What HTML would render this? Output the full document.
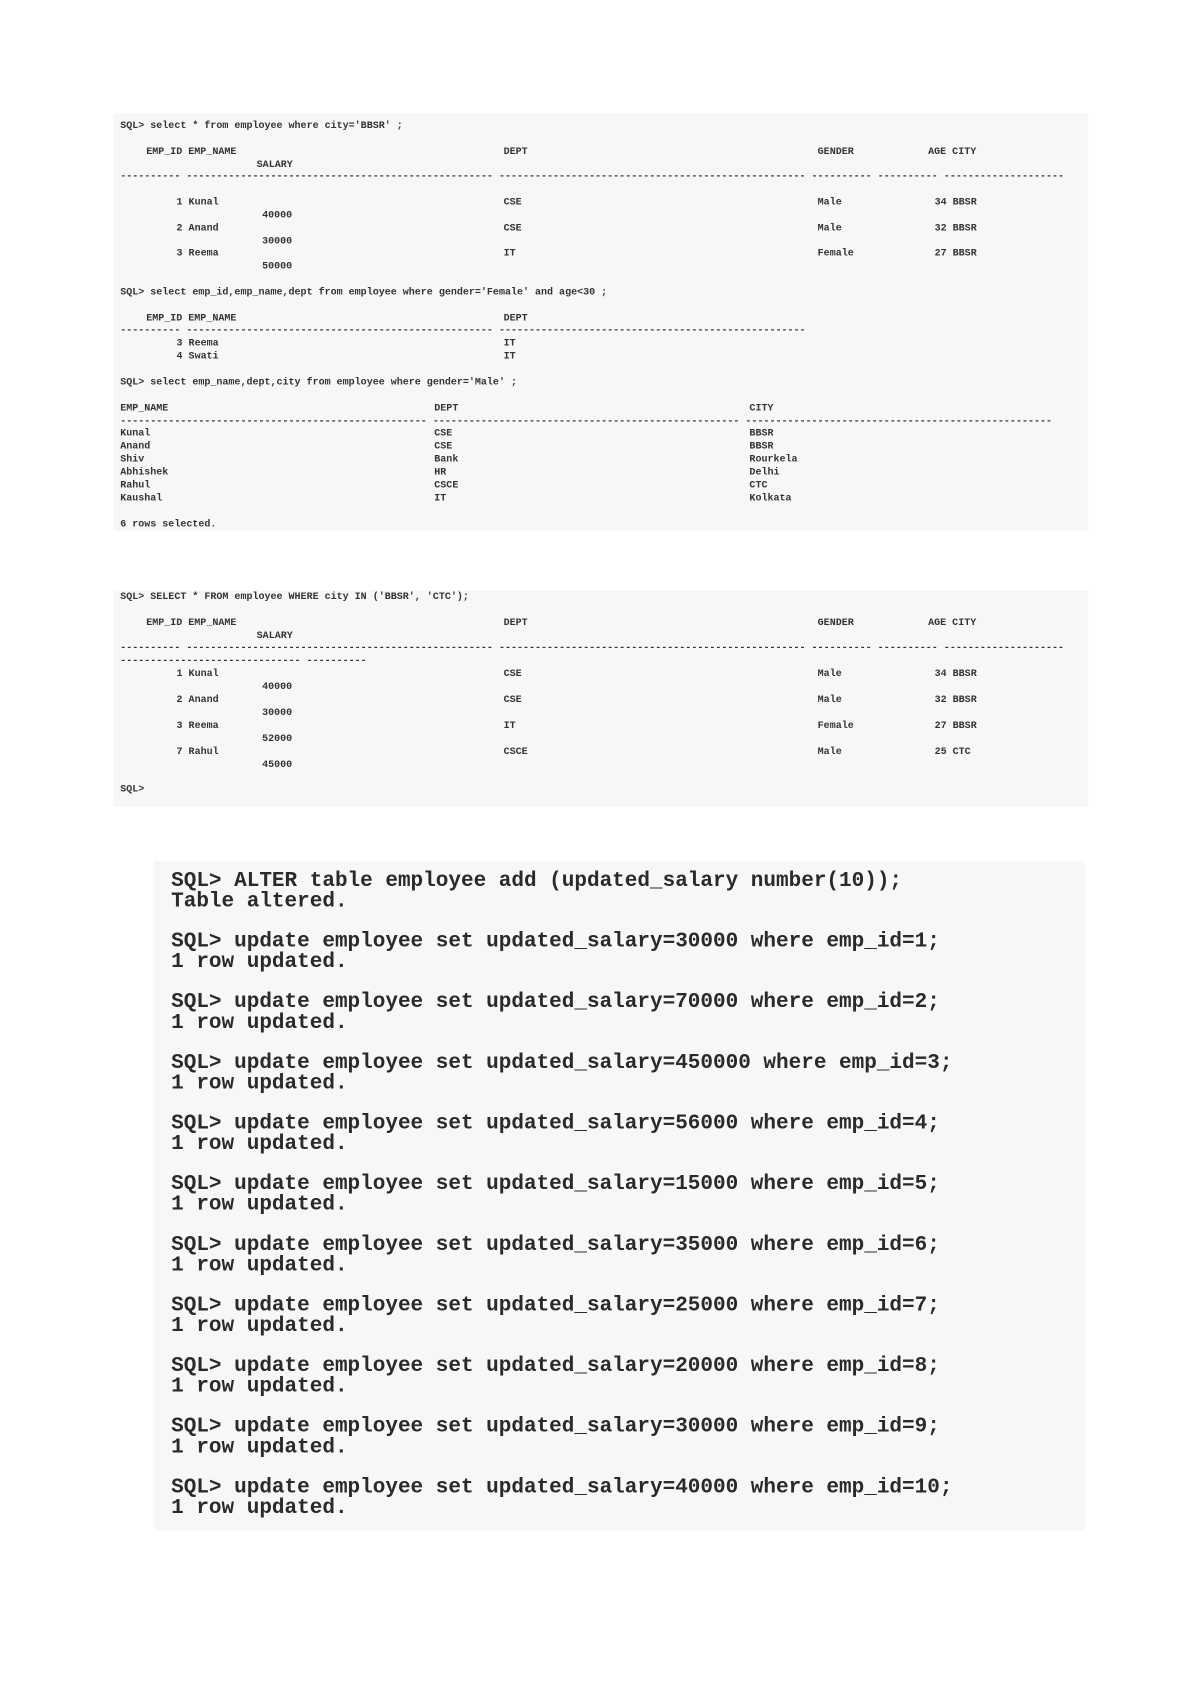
<!DOCTYPE html>
<html><head><meta charset="utf-8"><style>
html,body{margin:0;padding:0;background:#fff;width:1200px;height:1696px;overflow:hidden}
#w{position:absolute;left:0;top:0;width:1110px;height:1566px;transform:scale(1.083);transform-origin:0 0}
.box{position:absolute;background:#f7f7f7}
.s,.b{position:absolute;white-space:pre;font-family:"Liberation Mono",monospace;color:#222}
.s{font-size:9.25px;line-height:10px;margin-top:-5px;font-weight:bold;color:#333}
.b{font-size:19.4px;line-height:20px;margin-top:-10px;left:158px;font-weight:bold;color:#2a2a2a}
</style></head><body><div id="w">
<div class="box" style="left:105px;top:105px;width:900px;height:385px"></div>
<div class="box" style="left:105px;top:545px;width:900px;height:200px"></div>
<div class="box" style="left:142px;top:795px;width:860px;height:618px"></div>

<div class="s" style="left:111px;top:116px">SQL&gt; select * from employee where city='BBSR' ;</div>
<div class="s" style="left:135px;top:140px">EMP_ID EMP_NAME</div><div class="s" style="left:465px;top:140px">DEPT</div><div class="s" style="left:755px;top:140px">GENDER</div><div class="s" style="left:857px;top:140px">AGE CITY</div>
<div class="s" style="left:237px;top:152px">SALARY</div>
<div class="s" style="left:111px;top:163px">---------- --------------------------------------------------- --------------------------------------------------- ---------- ---------- --------------------</div>
<div class="s" style="left:163px;top:187px">1 Kunal</div><div class="s" style="left:465px;top:187px">CSE</div><div class="s" style="left:755px;top:187px">Male</div><div class="s" style="left:863px;top:187px">34 BBSR</div>
<div class="s" style="left:242px;top:199px">40000</div>
<div class="s" style="left:163px;top:211px">2 Anand</div><div class="s" style="left:465px;top:211px">CSE</div><div class="s" style="left:755px;top:211px">Male</div><div class="s" style="left:863px;top:211px">32 BBSR</div>
<div class="s" style="left:242px;top:223px">30000</div>
<div class="s" style="left:163px;top:234px">3 Reema</div><div class="s" style="left:465px;top:234px">IT</div><div class="s" style="left:755px;top:234px">Female</div><div class="s" style="left:863px;top:234px">27 BBSR</div>
<div class="s" style="left:242px;top:246px">50000</div>
<div class="s" style="left:111px;top:270px">SQL&gt; select emp_id,emp_name,dept from employee where gender='Female' and age&lt;30 ;</div>
<div class="s" style="left:135px;top:294px">EMP_ID EMP_NAME</div><div class="s" style="left:465px;top:294px">DEPT</div>
<div class="s" style="left:111px;top:305px">---------- --------------------------------------------------- ---------------------------------------------------</div>
<div class="s" style="left:163px;top:317px">3 Reema</div><div class="s" style="left:465px;top:317px">IT</div>
<div class="s" style="left:163px;top:329px">4 Swati</div><div class="s" style="left:465px;top:329px">IT</div>
<div class="s" style="left:111px;top:353px">SQL&gt; select emp_name,dept,city from employee where gender='Male' ;</div>
<div class="s" style="left:111px;top:377px">EMP_NAME</div><div class="s" style="left:401px;top:377px">DEPT</div><div class="s" style="left:692px;top:377px">CITY</div>
<div class="s" style="left:111px;top:389px">--------------------------------------------------- --------------------------------------------------- ---------------------------------------------------</div>
<div class="s" style="left:111px;top:400px">Kunal</div><div class="s" style="left:401px;top:400px">CSE</div><div class="s" style="left:692px;top:400px">BBSR</div>
<div class="s" style="left:111px;top:412px">Anand</div><div class="s" style="left:401px;top:412px">CSE</div><div class="s" style="left:692px;top:412px">BBSR</div>
<div class="s" style="left:111px;top:424px">Shiv</div><div class="s" style="left:401px;top:424px">Bank</div><div class="s" style="left:692px;top:424px">Rourkela</div>
<div class="s" style="left:111px;top:436px">Abhishek</div><div class="s" style="left:401px;top:436px">HR</div><div class="s" style="left:692px;top:436px">Delhi</div>
<div class="s" style="left:111px;top:448px">Rahul</div><div class="s" style="left:401px;top:448px">CSCE</div><div class="s" style="left:692px;top:448px">CTC</div>
<div class="s" style="left:111px;top:460px">Kaushal</div><div class="s" style="left:401px;top:460px">IT</div><div class="s" style="left:692px;top:460px">Kolkata</div>
<div class="s" style="left:111px;top:484px">6 rows selected.</div>

<div class="s" style="left:111px;top:551px">SQL&gt; SELECT * FROM employee WHERE city IN ('BBSR', 'CTC');</div>
<div class="s" style="left:135px;top:575px">EMP_ID EMP_NAME</div><div class="s" style="left:465px;top:575px">DEPT</div><div class="s" style="left:755px;top:575px">GENDER</div><div class="s" style="left:857px;top:575px">AGE CITY</div>
<div class="s" style="left:237px;top:587px">SALARY</div>
<div class="s" style="left:111px;top:598px">---------- --------------------------------------------------- --------------------------------------------------- ---------- ---------- --------------------</div>
<div class="s" style="left:111px;top:610px">------------------------------ ----------</div>
<div class="s" style="left:163px;top:622px">1 Kunal</div><div class="s" style="left:465px;top:622px">CSE</div><div class="s" style="left:755px;top:622px">Male</div><div class="s" style="left:863px;top:622px">34 BBSR</div>
<div class="s" style="left:242px;top:634px">40000</div>
<div class="s" style="left:163px;top:646px">2 Anand</div><div class="s" style="left:465px;top:646px">CSE</div><div class="s" style="left:755px;top:646px">Male</div><div class="s" style="left:863px;top:646px">32 BBSR</div>
<div class="s" style="left:242px;top:658px">30000</div>
<div class="s" style="left:163px;top:670px">3 Reema</div><div class="s" style="left:465px;top:670px">IT</div><div class="s" style="left:755px;top:670px">Female</div><div class="s" style="left:863px;top:670px">27 BBSR</div>
<div class="s" style="left:242px;top:682px">52000</div>
<div class="s" style="left:163px;top:694px">7 Rahul</div><div class="s" style="left:465px;top:694px">CSCE</div><div class="s" style="left:755px;top:694px">Male</div><div class="s" style="left:863px;top:694px">25 CTC</div>
<div class="s" style="left:242px;top:706px">45000</div>
<div class="s" style="left:111px;top:729px">SQL&gt;</div>

<div class="b" style="top:813px">SQL&gt; ALTER table employee add (updated_salary number(10));</div>
<div class="b" style="top:832px">Table altered.</div>
<div class="b" style="top:869px">SQL&gt; update employee set updated_salary=30000 where emp_id=1;</div><div class="b" style="top:888px">1 row updated.</div>
<div class="b" style="top:925px">SQL&gt; update employee set updated_salary=70000 where emp_id=2;</div><div class="b" style="top:944px">1 row updated.</div>
<div class="b" style="top:981px">SQL&gt; update employee set updated_salary=450000 where emp_id=3;</div><div class="b" style="top:1000px">1 row updated.</div>
<div class="b" style="top:1037px">SQL&gt; update employee set updated_salary=56000 where emp_id=4;</div><div class="b" style="top:1056px">1 row updated.</div>
<div class="b" style="top:1093px">SQL&gt; update employee set updated_salary=15000 where emp_id=5;</div><div class="b" style="top:1112px">1 row updated.</div>
<div class="b" style="top:1149px">SQL&gt; update employee set updated_salary=35000 where emp_id=6;</div><div class="b" style="top:1168px">1 row updated.</div>
<div class="b" style="top:1205px">SQL&gt; update employee set updated_salary=25000 where emp_id=7;</div><div class="b" style="top:1224px">1 row updated.</div>
<div class="b" style="top:1261px">SQL&gt; update employee set updated_salary=20000 where emp_id=8;</div><div class="b" style="top:1280px">1 row updated.</div>
<div class="b" style="top:1317px">SQL&gt; update employee set updated_salary=30000 where emp_id=9;</div><div class="b" style="top:1336px">1 row updated.</div>
<div class="b" style="top:1373px">SQL&gt; update employee set updated_salary=40000 where emp_id=10;</div><div class="b" style="top:1392px">1 row updated.</div>
</div></body></html>
